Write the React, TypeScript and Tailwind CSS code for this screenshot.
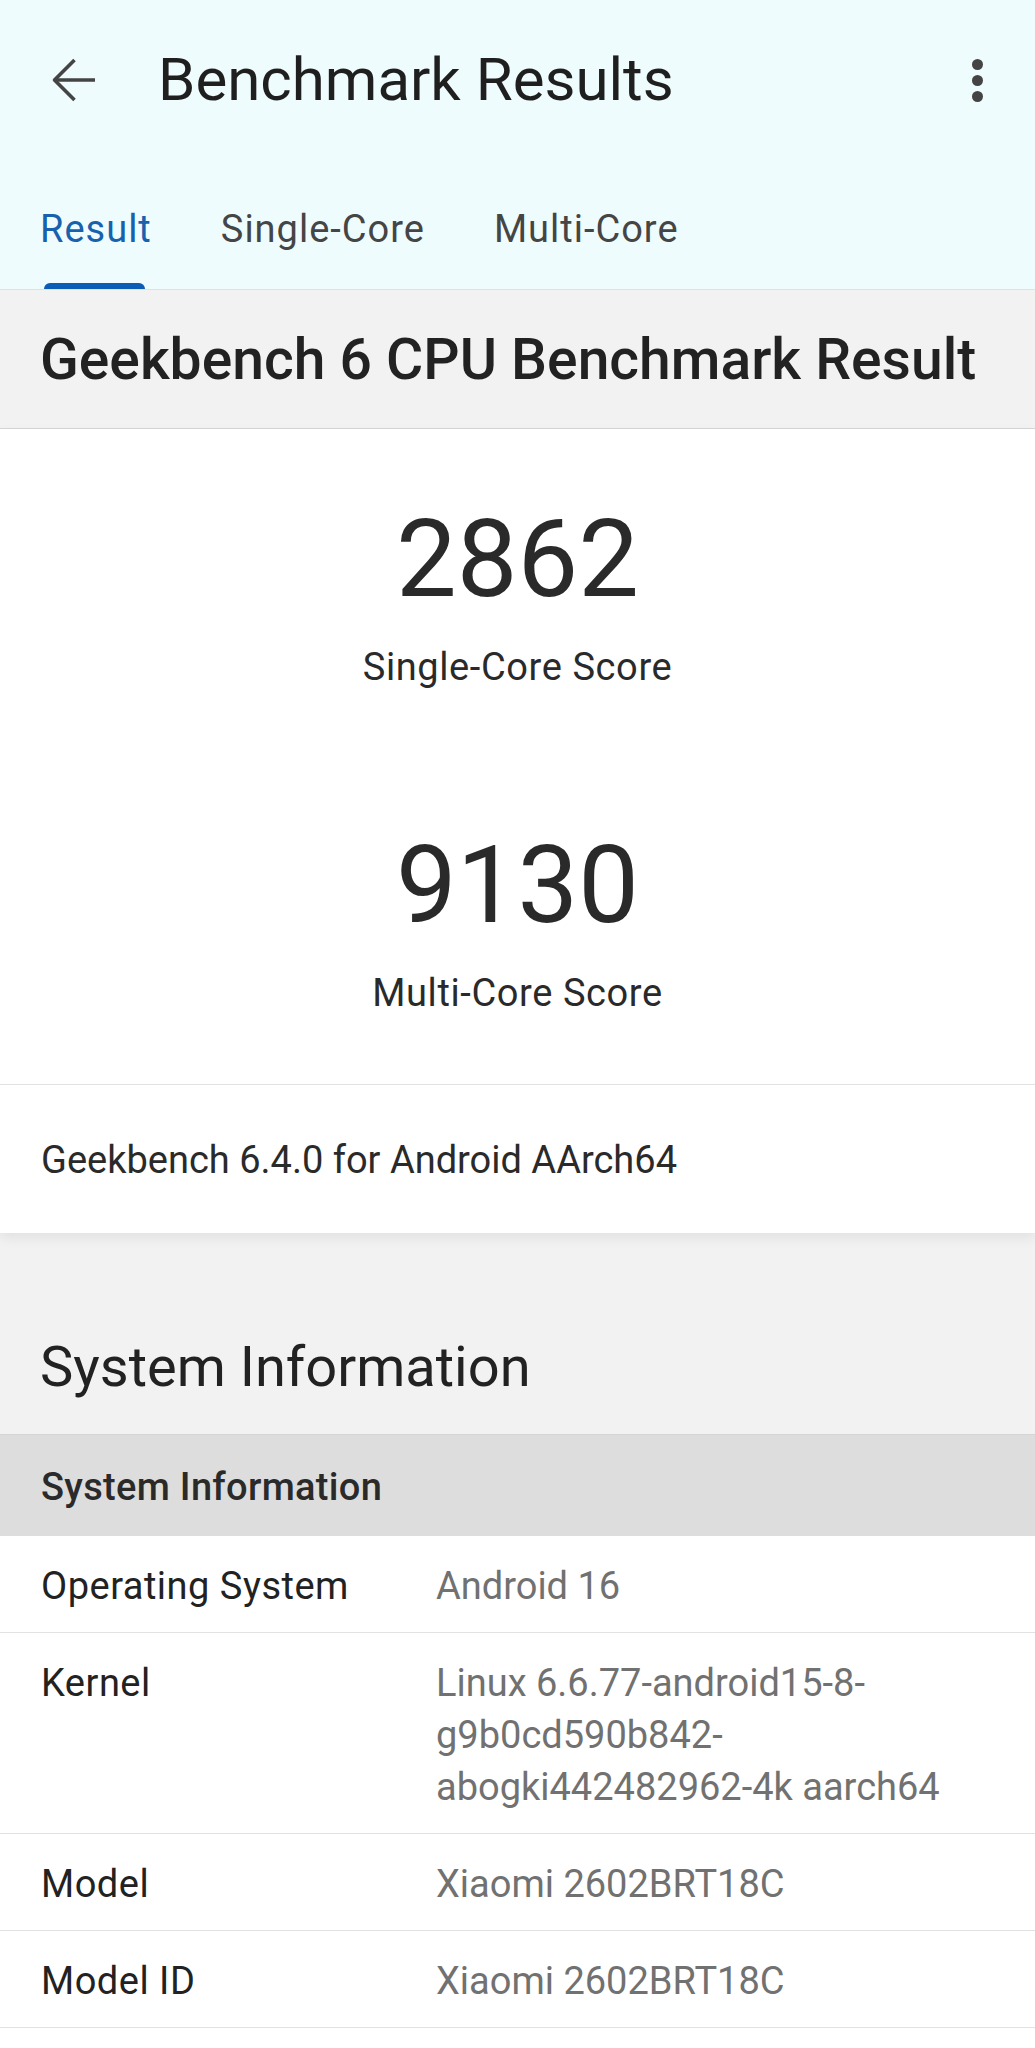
import React from 'react';

const rows = [
  { label: 'Operating System', value: ['Android 16'] },
  { label: 'Kernel', value: ['Linux 6.6.77-android15-8-', 'g9b0cd590b842-', 'abogki442482962-4k aarch64'] },
  { label: 'Model', value: ['Xiaomi 2602BRT18C'] },
  { label: 'Model ID', value: ['Xiaomi 2602BRT18C'] },
];

function BackArrow() {
  return (
    <svg width="46" height="46" viewBox="0 0 46 46" fill="none" className="shrink-0">
      <path d="M4 23H44" stroke="#444" strokeWidth="3.6" />
      <path d="M23.5 3L3.5 23L23.5 43" stroke="#444" strokeWidth="3.6" strokeLinejoin="round" />
    </svg>
  );
}

function MoreDots() {
  return (
    <div className="flex flex-col items-center gap-[5px]">
      <span className="w-[11px] h-[11px] rounded-full bg-[#444]" />
      <span className="w-[11px] h-[11px] rounded-full bg-[#444]" />
      <span className="w-[11px] h-[11px] rounded-full bg-[#444]" />
    </div>
  );
}

export default function App() {
  const tabs = ['Result', 'Single-Core', 'Multi-Core'];

  return (
    <div className="w-[1035px] h-[2048px] overflow-hidden bg-white font-['Roboto',sans-serif] text-[#222]">
      {/* Top bar + tabs */}
      <div className="bg-[#effcfd] border-b border-[#dde3e4]">
        <div className="flex items-center h-[160px] pl-[51px] pr-[52px]">
          <BackArrow />
          <h1 className="ml-[61px] text-[60px] leading-none font-normal text-[#1f1f1f]">Benchmark Results</h1>
          <div className="ml-auto">
            <MoreDots />
          </div>
        </div>
        <div className="flex pl-[40px] pt-[43px] gap-[69px]">
          {tabs.map((t, i) => (
            <div key={t} className="flex flex-col">
              <span className={`text-[38px] leading-[52px] tracking-[1px] ${i === 0 ? 'text-[#1761ad]' : 'text-[#454545]'}`}>{t}</span>
              <div className={`mt-[28px] h-[6px] w-[101px] ml-[4px] rounded-t-full ${i === 0 ? 'bg-[#0b5cb5]' : 'bg-transparent'}`} />
            </div>
          ))}
        </div>
      </div>

      {/* Result heading */}
      <div className="h-[139px] flex items-center px-[40px] bg-[#f2f2f2] border-b border-[#d6d6d6]">
        <h2 className="text-[57px] leading-none font-medium text-[#222]">Geekbench 6 CPU Benchmark Result</h2>
      </div>

      {/* Scores card */}
      <div className="relative bg-white shadow-[0_5px_12px_rgba(0,0,0,0.07)]">
        <div className="flex flex-col items-center pt-[76px] pb-[65px] border-b border-[#e2e2e2]">
          <div className="text-[108px] leading-none text-[#2a2a2a]">2862</div>
          <div className="mt-[28px] text-[38px] leading-[52px] tracking-[0.6px] text-[#2a2a2a]">Single-Core Score</div>
          <div className="mt-[138px] text-[108px] leading-none text-[#2a2a2a]">9130</div>
          <div className="mt-[28px] text-[38px] leading-[52px] tracking-[0.6px] text-[#2a2a2a]">Multi-Core Score</div>
        </div>
        <div className="h-[148px] flex items-center px-[41px] pt-[2px]">
          <span className="text-[38px] leading-[52px] text-[#2a2a2a]">Geekbench 6.4.0 for Android AArch64</span>
        </div>
      </div>

      {/* System information */}
      <div className="bg-[#f2f2f2] pt-[100px] pb-[33px] px-[40px] border-b border-[#d5d5d5]">
        <h2 className="text-[56px] leading-[68px] font-normal text-[#222]">System Information</h2>
      </div>
      <div className="h-[101px] flex items-center px-[41px] pt-[3px] bg-[#dddddd]">
        <span className="text-[38px] leading-[52px] font-medium tracking-[0.3px] text-[#2a2a2a]">System Information</span>
      </div>

      <div className="bg-white">
        {rows.map((r) => (
          <div key={r.label} className="grid grid-cols-[395px_1fr] pl-[41px] pr-[40px] pt-[24px] pb-[20px] border-b border-[#e2e2e2]">
            <div className="text-[38px] leading-[52px] tracking-[0.5px] text-[#222]">{r.label}</div>
            <div className="text-[38px] leading-[52px] text-[#717171]">
              {r.value.map((line) => (
                <div key={line}>{line}</div>
              ))}
            </div>
          </div>
        ))}
      </div>
    </div>
  );
}
